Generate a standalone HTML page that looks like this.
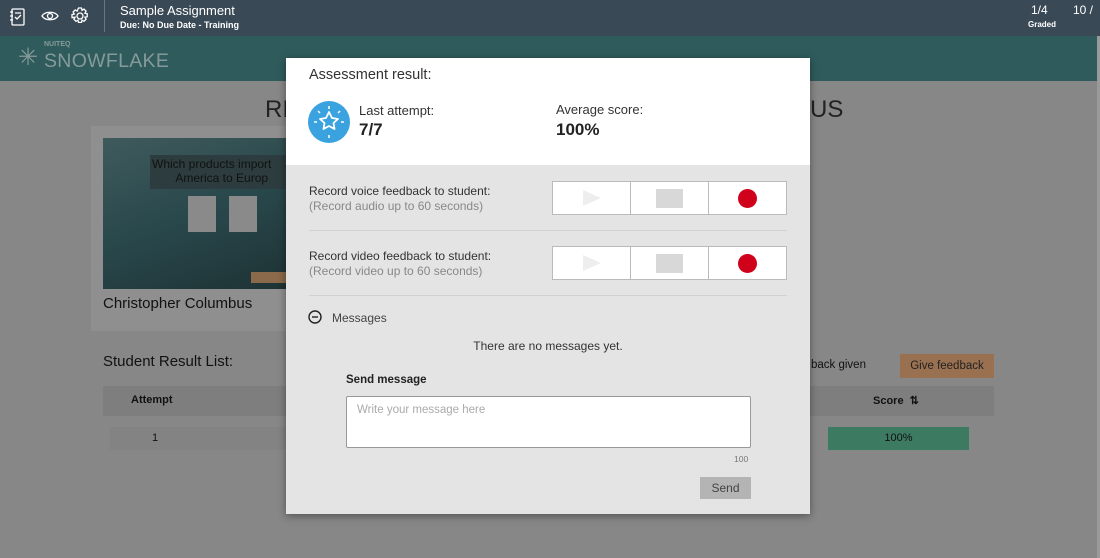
<!DOCTYPE html>
<html><head><style>
*{box-sizing:border-box;margin:0;padding:0}
body{width:1100px;height:558px;overflow:hidden;background:#878787;font-family:"Liberation Sans",sans-serif;position:relative}
.a{position:absolute}
.top{left:0;top:0;width:1100px;height:36px;background:#3a4956;color:#fff}
.teal{left:0;top:36px;width:1097px;height:45px;background:#2f5b5c}
.modal{left:286px;top:58px;width:524px;height:456px;background:#e4e4e4;box-shadow:0 2px 8px rgba(0,0,0,.4)}
.wt{left:0;top:0;width:524px;height:107px;background:#fff}
.btns{width:235px;height:34px;display:flex;border:1px solid #bbb;background:#fff}
.btns div{flex:1;border-right:1px solid #bbb;display:flex;align-items:center;justify-content:center}
.btns div:last-child{border-right:none}
.sep{left:23px;width:478px;height:1px;background:#d2d2d2}
.lbl{font-size:12px;color:#333;line-height:15px}
.lbl span{color:#888}
</style></head><body>
<div class="a top">
 <svg class="a" style="left:10px;top:8px" width="16" height="18" viewBox="0 0 16 18" fill="none" stroke="#fff" stroke-width="1.3"><rect x="2" y="1" width="12" height="16" rx="1"/><path d="M5 5h6M5 9l2 2 4-4"/><path d="M0 4h3M0 8h3M0 12h3"/></svg>
 <svg class="a" style="left:41px;top:10px" width="18" height="12" viewBox="0 0 18 12" fill="none" stroke="#fff" stroke-width="1.3"><path d="M1 6C4 1 14 1 17 6C14 11 4 11 1 6Z"/><circle cx="9" cy="6" r="2.5"/></svg>
 <svg class="a" style="left:71px;top:7px" width="18" height="18" viewBox="0 0 18 18" fill="none" stroke="#fff" stroke-width="1.3"><circle cx="9" cy="9" r="3"/><path d="M7.5 1h3l.5 2.3 2-1.2 2.1 2.1-1.2 2 2.3.5v3l-2.3.5 1.2 2-2.1 2.1-2-1.2-.5 2.3h-3l-.5-2.3-2 1.2-2.1-2.1 1.2-2L1 10.5v-3l2.3-.5-1.2-2 2.1-2.1 2 1.2z"/></svg>
 <div class="a" style="left:104px;top:0;width:1px;height:32px;background:#6b7782"></div>
 <div class="a" style="left:120px;top:3px;font-size:13px">Sample Assignment</div>
 <div class="a" style="left:120px;top:20px;font-size:9px;font-weight:bold">Due: No Due Date - Training</div>
 <div class="a" style="left:1031px;top:3px;font-size:12px">1/4</div>
 <div class="a" style="left:1028px;top:20px;font-size:8px;font-weight:bold">Graded</div>
 <div class="a" style="left:1073px;top:3px;font-size:12px">10 /</div>
</div>
<div class="a teal">
 <div class="a" style="left:18px;top:8px;font-size:24px;color:#879a9a;line-height:28px">✳</div>
 <div class="a" style="left:44px;top:5px;font-size:7px;color:#879a9a;font-weight:bold">NUITEQ</div>
 <div class="a" style="left:44px;top:14px;font-size:19.5px;color:#879a9a;letter-spacing:.3px">SNOWFLAKE</div>
</div>
<div class="a" style="left:1097px;top:36px;width:3px;height:522px;background:#9a9a9a"></div>
<div class="a" style="left:265px;top:96px;font-size:24px;color:#222">RI</div>
<div class="a" style="left:810px;top:96px;font-size:24px;color:#222">US</div>
<div class="a" style="left:91px;top:126px;width:200px;height:205px;background:#8f8f8f"></div>
<div class="a" style="left:103px;top:138px;width:186px;height:151px;background:linear-gradient(160deg,#3f5a5c,#29484c 50%,#1e3234);"></div>
<div class="a" style="left:150px;top:155px;width:140px;height:34px;background:#2d3c3e;color:#111;font-size:12px;padding:2px 0 0 2px">Which products import<br>&nbsp;&nbsp;&nbsp;&nbsp;&nbsp;&nbsp;&nbsp;America to Europ</div>
<div class="a" style="left:188px;top:196px;width:28px;height:36px;background:#8a8a8a"></div>
<div class="a" style="left:229px;top:196px;width:28px;height:36px;background:#8a8a8a"></div>
<div class="a" style="left:251px;top:272px;width:36px;height:11px;background:#8a6a4a"></div>
<div class="a" style="left:103px;top:295px;font-size:15px;color:#111">Christopher Columbus</div>
<div class="a" style="left:103px;top:353px;font-size:15px;color:#111">Student Result List:</div>
<div class="a" style="left:103px;top:386px;width:891px;height:30px;background:#7e7e7e"></div>
<div class="a" style="left:131px;top:394px;font-size:11px;font-weight:bold;color:#111">Attempt</div>
<div class="a" style="left:110px;top:427px;width:176px;height:23px;background:#838383;font-size:11px;color:#111;padding:5px 0 0 42px">1</div>
<div class="a" style="left:811px;top:359px;font-size:11.5px;color:#111">back given</div>
<div class="a" style="left:900px;top:354px;width:94px;height:24px;background:#9a7150;font-size:11.5px;color:#222;text-align:center;line-height:24px">Give feedback</div>
<div class="a" style="left:873px;top:394px;font-size:11px;font-weight:bold;color:#111">Score &nbsp;⇅</div>
<div class="a" style="left:828px;top:427px;width:141px;height:23px;background:#3d7a62;font-size:11px;color:#111;text-align:center;line-height:23px">100%</div>
<div class="a modal">
 <div class="a wt"></div>
 <div class="a" style="left:23px;top:9px;font-size:14.5px;color:#333">Assessment result:</div>
 <svg class="a" style="left:22px;top:43px" width="42" height="42" viewBox="0 0 42 42"><circle cx="21" cy="21" r="21" fill="#3ba2e0"/><path d="M21 11l3 6 6 1-4.5 4 1 6-5.5-3-5.5 3 1-6-4.5-4 6-1z" fill="none" stroke="#fff" stroke-width="1.8" stroke-linejoin="round"/><path d="M21 5v3M10 10l2 2M32 10l-2 2M6 21h3M36 21h-3M21 34v3" stroke="#fff" stroke-width="1.5"/></svg>
 <div class="a" style="left:73px;top:45px;font-size:13px;color:#333">Last attempt:</div>
 <div class="a" style="left:73px;top:62px;font-size:17px;font-weight:bold;color:#222">7/7</div>
 <div class="a" style="left:270px;top:44px;font-size:13px;color:#333">Average score:</div>
 <div class="a" style="left:270px;top:62px;font-size:17px;font-weight:bold;color:#222">100%</div>
 <div class="a lbl" style="left:23px;top:126px">Record voice feedback to student:<br><span>(Record audio up to 60 seconds)</span></div>
 <div class="a btns" style="left:266px;top:123px"><div><svg width="20" height="18"><path d="M1 1l18 8-18 8z" fill="#eee"/></svg></div><div><div style="width:27px;height:19px;background:#d8d8d8;flex:none;border:none"></div></div><div><div style="width:19px;height:19px;border-radius:50%;background:#d0021b;flex:none;border:none"></div></div></div>
 <div class="a sep" style="top:172px"></div>
 <div class="a lbl" style="left:23px;top:191px">Record video feedback to student:<br><span>(Record video up to 60 seconds)</span></div>
 <div class="a btns" style="left:266px;top:188px"><div><svg width="20" height="18"><path d="M1 1l18 8-18 8z" fill="#eee"/></svg></div><div><div style="width:27px;height:19px;background:#d8d8d8;flex:none;border:none"></div></div><div><div style="width:19px;height:19px;border-radius:50%;background:#d0021b;flex:none;border:none"></div></div></div>
 <div class="a sep" style="top:237px"></div>
 <svg class="a" style="left:22px;top:252px" width="14" height="14"><circle cx="7" cy="7" r="6" fill="none" stroke="#222" stroke-width="1.4"/><path d="M4 7h6" stroke="#222" stroke-width="1.4"/></svg>
 <div class="a" style="left:46px;top:253px;font-size:12px;color:#444">Messages</div>
 <div class="a" style="left:0;top:281px;width:524px;text-align:center;font-size:12px;color:#333">There are no messages yet.</div>
 <div class="a" style="left:60px;top:316px;font-size:11.5px;font-weight:bold;color:#222">Send message</div>
 <div class="a" style="left:60px;top:338px;width:405px;height:52px;background:#fff;border:1px solid #999;border-radius:2px;font-size:11.5px;color:#aaa;padding:7px 10px">Write your message here</div>
 <div class="a" style="left:448px;top:396px;font-size:8.5px;color:#777">100</div>
 <div class="a" style="left:414px;top:419px;width:51px;height:22px;background:#b4b4b4;font-size:12px;color:#444;text-align:center;line-height:22px">Send</div>
</div>
</body></html>
